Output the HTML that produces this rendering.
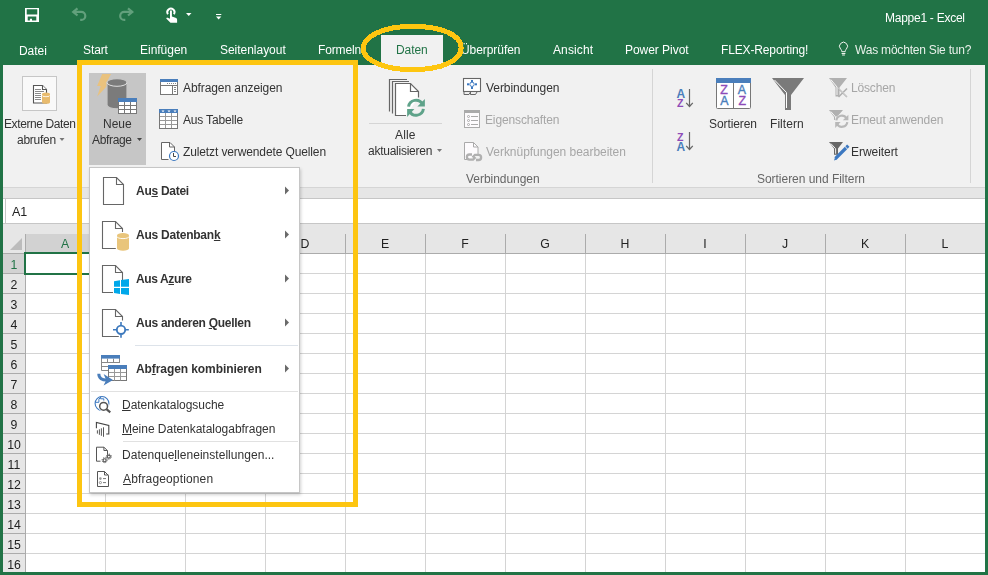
<!DOCTYPE html>
<html><head><meta charset="utf-8">
<style>
*{margin:0;padding:0;box-sizing:border-box}
html,body{width:988px;height:575px;overflow:hidden;background:#217346;font-family:"Liberation Sans",sans-serif;font-size:11.7px;color:#444}
.a{position:absolute}
.t{position:absolute;white-space:nowrap;line-height:1;will-change:transform}
.w{color:#fff}
.u{position:absolute;white-space:nowrap;line-height:20px;font-size:12px;will-change:transform}
svg{position:absolute;overflow:visible}
</style></head><body>
<!-- title bar -->

<!-- tabs -->
<div class="a" style="left:381px;top:35px;width:62px;height:31px;background:#f1f1f1"></div>

<!-- ribbon -->
<div class="a" style="left:3px;top:65px;width:982px;height:123px;background:#f1f1f1;border-bottom:1px solid #d5d5d5"></div>
<div class="a" style="left:3px;top:188px;width:982px;height:10px;background:#e6e6e6"></div>


<!-- ribbon content -->
<div class="a" style="left:22px;top:76px;width:35px;height:35px;border:1px solid #c6c6c6;background:#f9f9f9"></div>
<svg style="left:0;top:0" width="988" height="200">
 <path d="M33.5 85.5h9l4 4v13.5h-13z" fill="#fff" stroke="#555" stroke-width="1.1"/>
 <path d="M42.5 85.5v4h4" fill="#fff" stroke="#555" stroke-width="1.1"/>
 <g stroke="#8a8a8a" stroke-width="1"><path d="M35 89.5h6M35 91.5h9M35 93.5h6M35 95.5h6M35 97.5h6M35 99.5h6"/></g>
 <path d="M42 94.2a4 1.6 0 0 1 8 0v8a4 1.6 0 0 1-8 0z" fill="#e8bb6e"/>
 <path d="M42 95.3a4 1.4 0 0 0 8 0" fill="none" stroke="#fff" stroke-width="0.8"/>
</svg>
<svg style="left:0;top:0" width="100" height="160"><path d="M59.5 138h5l-2.5 3z" fill="#777"/></svg>

<div class="a" style="left:89px;top:73px;width:57px;height:92px;background:#c6c6c6"></div>
<svg style="left:0;top:0" width="200" height="200">
 <path d="M102.2 73.9h8.8l-4.6 9.1h3.4l-12.6 13.5l3.5-10.4h-3.6z" fill="#e9c27e"/>
 <path d="M107 82.5a10 3.8 0 0 1 20 0v22.5a10 3.8 0 0 1-20 0z" fill="#7b7b7b" stroke="#c6c6c6" stroke-width="1.2"/>
 <path d="M107 82.5a10 3.8 0 0 0 20 0" fill="none" stroke="#e0e0e0" stroke-width="1"/>
 <rect x="118" y="98" width="19" height="16" fill="#777"/>
 <rect x="118" y="98" width="19" height="4" fill="#4a7ebb"/>
 <g fill="#fff">
  <rect x="119" y="102" width="5" height="3"/><rect x="125" y="102" width="5" height="3"/><rect x="131" y="102" width="5" height="3"/>
  <rect x="119" y="106" width="5" height="3"/><rect x="125" y="106" width="5" height="3"/><rect x="131" y="106" width="5" height="3"/>
  <rect x="119" y="110" width="5" height="3"/><rect x="125" y="110" width="5" height="3"/><rect x="131" y="110" width="5" height="3"/>
 </g>
 <!-- abfragen anzeigen -->
 <rect x="160.5" y="79.5" width="17" height="15" fill="#fff" stroke="#777"/>
 <rect x="160" y="79" width="18" height="3" fill="#4a7ebb"/>
 <path d="M161 85.5h16M172.5 86v8" stroke="#777" fill="none"/>
 <g fill="#888"><rect x="167" y="83" width="1" height="1"/><rect x="169" y="83" width="1" height="1"/><rect x="171" y="83" width="1" height="1"/><rect x="173" y="83" width="1" height="1"/><rect x="175" y="83" width="1" height="1"/>
 <rect x="174" y="87" width="2" height="1"/><rect x="174" y="89" width="2" height="1"/><rect x="174" y="91" width="2" height="1"/></g>
 <!-- aus tabelle -->
 <rect x="159.5" y="109.5" width="18" height="19" fill="#fff" stroke="#777"/>
 <rect x="159" y="109" width="19" height="4" fill="#4a7ebb"/>
 <path d="M165.5 113v15M171.5 113v15M160 116.5h17M160 120.5h17M160 124.5h17" stroke="#999" fill="none"/>
 <path d="M161.5 110.5h3l-1.5 1.8zM167.5 110.5h3l-1.5 1.8zM173.5 110.5h3l-1.5 1.8z" fill="#fff"/>
 <!-- zuletzt -->
 <path d="M161.5 142.5h8.5l4.5 4.5v12.5h-13z" fill="#fff"/>
 <path d="M174.5 151.5v-4.5l-4.5-4.5h-8.5v17h7" fill="none" stroke="#666"/>
 <path d="M169.5 142.5v4.5h5" fill="none" stroke="#666"/>
 <circle cx="174" cy="156" r="4.5" fill="#fff" stroke="#3c78c0" stroke-width="1.2"/>
 <path d="M173.5 153v3.5h2.5" fill="none" stroke="#444" stroke-width="1"/>
</svg>
<svg style="left:0;top:0" width="200" height="200"><path d="M137 138h5l-2.5 3z" fill="#444"/></svg>

<!-- Verbindungen group -->
<svg style="left:0;top:0" width="988" height="200">
 <path d="M389.5 111.5v-32h17.5" fill="none" stroke="#666" stroke-width="1.2"/>
 <path d="M392.5 113.5v-32h16.5" fill="none" stroke="#666" stroke-width="1.2"/>
 <path d="M406 115.5h-10.5v-32h15l8 8v6" fill="#fff" stroke="#666" stroke-width="1.2"/>
 <path d="M410.5 83.5v8h8" fill="none" stroke="#666" stroke-width="1.2"/>
 <path d="M408.6 106.6A7.4 7.4 0 0 1 422.4 104.05" fill="none" stroke="#5fa38a" stroke-width="3"/>
 <path d="M424.9 99.1V106.6H417.4z" fill="#5fa38a"/>
 <path d="M423.4 108.9A7.4 7.4 0 0 1 409.6 111.45" fill="none" stroke="#5fa38a" stroke-width="3"/>
 <path d="M407.1 108.9V116.9L414.4 108.9z" fill="#5fa38a"/>
 <path d="M369 123.5h73" stroke="#d5d5d5"/>
 <!-- verbindungen icon -->
 <rect x="463.5" y="78.5" width="17" height="13" fill="#fff" stroke="#666" stroke-width="1.1"/>
 <path d="M464 92v2.5h5l1.5-2.5M470.5 92v2.5h5l1.5-2.5" fill="none" stroke="#666" stroke-width="1"/>
 <circle cx="472" cy="84.3" r="2.2" fill="none" stroke="#3c78c0" stroke-width="1"/>
 <g fill="#3c78c0"><rect x="471" y="80" width="2" height="2"/><rect x="471" y="87" width="2" height="2"/><rect x="467" y="83.3" width="2" height="2"/><rect x="475" y="83.3" width="2" height="2"/></g>
 <!-- eigenschaften -->
 <rect x="464.5" y="110.5" width="15" height="17" fill="#fdfbfd" stroke="#aaa"/>
 <rect x="464" y="110" width="16" height="3" fill="#aaa"/>
 <g fill="none" stroke="#aaa"><circle cx="468.5" cy="116.5" r="1"/><circle cx="468.5" cy="120.5" r="1"/><circle cx="468.5" cy="124.5" r="1"/><path d="M471 116.5h7M471 120.5h7M471 124.5h7"/></g>
 <!-- verknuepfungen -->
 <path d="M468 159.5h-3.5v-17h9l4.5 4.5v7" fill="#fdfbfd" stroke="#aaa"/>
 <path d="M473.5 142.5v4.5h4.5" fill="none" stroke="#aaa"/>
 <g fill="none" stroke="#b0b0b0" stroke-width="2.3"><path d="M472 154.5h-2.5a2.6 2.6 0 0 0 0 5.2h3.5l2.5-2.6"/><path d="M476 160h2.5a2.6 2.6 0 0 0 0-5.2h-3.5l-2.5 2.6"/></g>
 <path d="M652.5 69v114" stroke="#d5d5d5"/>
 <path d="M970.5 69v114" stroke="#d5d5d5"/>
</svg>
<svg style="left:0;top:0" width="988" height="200"><path d="M437 149h5l-2.5 3z" fill="#777"/></svg>

<!-- Sort & filter -->
<svg style="left:0;top:0" width="988" height="200">
 <text x="676.5" y="98" font-family="Liberation Sans" font-weight="bold" font-size="12" fill="#4a7ebb">A</text>
 <text x="677" y="107" font-family="Liberation Sans" font-weight="bold" font-size="10.6" fill="#8e4cb8">Z</text>
 <path d="M689.5 89v17.5M686.2 102.8l3.3 3.7l3.3-3.7" fill="none" stroke="#666" stroke-width="1.2"/>
 <text x="677" y="140.5" font-family="Liberation Sans" font-weight="bold" font-size="10.6" fill="#8e4cb8">Z</text>
 <text x="676.5" y="150.5" font-family="Liberation Sans" font-weight="bold" font-size="12" fill="#4a7ebb">A</text>
 <path d="M689.5 132v17.5M686.2 145.8l3.3 3.7l3.3-3.7" fill="none" stroke="#666" stroke-width="1.2"/>
 <!-- sortieren -->
 <rect x="716.5" y="78.5" width="34" height="30" rx="1" fill="#fff" stroke="#777"/>
 <rect x="716" y="78" width="35" height="5" fill="#4a7ebb"/>
 <path d="M733.5 83v25" stroke="#777"/>
 <text x="720.3" y="93.6" font-family="Liberation Sans" font-size="12.4" fill="#8e4cb8" stroke="#8e4cb8" stroke-width="0.35">Z</text>
 <text x="720.3" y="104.8" font-family="Liberation Sans" font-size="12.4" fill="#4a7ebb" stroke="#4a7ebb" stroke-width="0.35">A</text>
 <text x="737.8" y="93.6" font-family="Liberation Sans" font-size="12.4" fill="#4a7ebb" stroke="#4a7ebb" stroke-width="0.35">A</text>
 <text x="738.5" y="104.8" font-family="Liberation Sans" font-size="12.4" fill="#8e4cb8" stroke="#8e4cb8" stroke-width="0.35">Z</text>
 <!-- filter -->
 <path d="M772 78h32l-13 17v15h-6v-15z" fill="#7a7a7a"/>
 <path d="M774.5 80l12 12.5v15.5" fill="none" stroke="#fff" stroke-width="1"/>
 <!-- loeschen -->
 <path d="M829 78h18l-7.5 9.5v9h-4v-9z" fill="#b0b0b0"/>
 <path d="M830.8 79.5l6.2 7.5v8" fill="none" stroke="#fff" stroke-width="0.9"/>
 <path d="M838.5 88.5l8.5 8.5M847 88.5l-8.5 8.5" stroke="#b0b0b0" stroke-width="1.6"/>
 <path d="M838.3 87.8l8.9 9" stroke="#f1f1f1" stroke-width="0.6"/>
 <!-- erneut -->
 <path d="M829 110h14l-6 7v3h-3v-3z" fill="#b0b0b0"/>
 <path d="M830.8 111.5l4.8 5.5v3" fill="none" stroke="#fff" stroke-width="0.9"/>
 <g transform="translate(841.8 121.2) scale(0.74) translate(-416 -107.75)">
 <circle cx="416" cy="107.75" r="9.5" fill="#f1f1f1"/>
 <path d="M408.6 106.6A7.4 7.4 0 0 1 422.4 104.05" fill="none" stroke="#b8b8b8" stroke-width="3"/>
 <path d="M424.9 99.1V106.6H417.4z" fill="#b8b8b8"/>
 <path d="M423.4 108.9A7.4 7.4 0 0 1 409.6 111.45" fill="none" stroke="#b8b8b8" stroke-width="3"/>
 <path d="M407.1 108.9V116.9L414.4 108.9z" fill="#b8b8b8"/>
 </g>
 <!-- erweitert -->
 <path d="M829 142h14l-5 6.5v6.2h-4v-6.2z" fill="#666"/>
 <path d="M830.8 143.5l4.8 5.2v5" fill="none" stroke="#fff" stroke-width="0.9"/>
 <path d="M835.5 158.5l10.5-10.5" stroke="#3c78c0" stroke-width="3.2"/>
 <path d="M846.5 147.5l1.8-1.8" stroke="#3c78c0" stroke-width="3.2"/>
 <path d="M834 160.5l1-3l2 2z" fill="#3c78c0"/>
</svg>

<!-- formula bar -->
<div class="a" style="left:3px;top:198px;width:982px;height:26px;background:#fff;border-top:1px solid #c6c6c6;border-bottom:1px solid #c6c6c6"></div>
<div class="a" style="left:3px;top:253px;width:982px;height:322px;background:#fff"></div>

<!-- grid -->
<svg class="a" style="left:0;top:0" width="988" height="575" shape-rendering="crispEdges">
<rect x="3" y="224" width="982" height="29" fill="#e6e6e6"/>
<rect x="26" y="234" width="79" height="19" fill="#d2d2d2"/>
<rect x="3" y="253" width="22" height="319" fill="#e6e6e6"/>
<rect x="3" y="254" width="22" height="19" fill="#d2d2d2"/>
<line x1="25.5" y1="254" x2="25.5" y2="572" stroke="#d4d4d4"/>
<line x1="25.5" y1="234" x2="25.5" y2="253" stroke="#ababab"/>
<line x1="105.5" y1="254" x2="105.5" y2="572" stroke="#d4d4d4"/>
<line x1="105.5" y1="234" x2="105.5" y2="253" stroke="#ababab"/>
<line x1="185.5" y1="254" x2="185.5" y2="572" stroke="#d4d4d4"/>
<line x1="185.5" y1="234" x2="185.5" y2="253" stroke="#ababab"/>
<line x1="265.5" y1="254" x2="265.5" y2="572" stroke="#d4d4d4"/>
<line x1="265.5" y1="234" x2="265.5" y2="253" stroke="#ababab"/>
<line x1="345.5" y1="254" x2="345.5" y2="572" stroke="#d4d4d4"/>
<line x1="345.5" y1="234" x2="345.5" y2="253" stroke="#ababab"/>
<line x1="425.5" y1="254" x2="425.5" y2="572" stroke="#d4d4d4"/>
<line x1="425.5" y1="234" x2="425.5" y2="253" stroke="#ababab"/>
<line x1="505.5" y1="254" x2="505.5" y2="572" stroke="#d4d4d4"/>
<line x1="505.5" y1="234" x2="505.5" y2="253" stroke="#ababab"/>
<line x1="585.5" y1="254" x2="585.5" y2="572" stroke="#d4d4d4"/>
<line x1="585.5" y1="234" x2="585.5" y2="253" stroke="#ababab"/>
<line x1="665.5" y1="254" x2="665.5" y2="572" stroke="#d4d4d4"/>
<line x1="665.5" y1="234" x2="665.5" y2="253" stroke="#ababab"/>
<line x1="745.5" y1="254" x2="745.5" y2="572" stroke="#d4d4d4"/>
<line x1="745.5" y1="234" x2="745.5" y2="253" stroke="#ababab"/>
<line x1="825.5" y1="254" x2="825.5" y2="572" stroke="#d4d4d4"/>
<line x1="825.5" y1="234" x2="825.5" y2="253" stroke="#ababab"/>
<line x1="905.5" y1="254" x2="905.5" y2="572" stroke="#d4d4d4"/>
<line x1="905.5" y1="234" x2="905.5" y2="253" stroke="#ababab"/>
<line x1="26" y1="273.5" x2="985" y2="273.5" stroke="#d4d4d4"/>
<line x1="3" y1="273.5" x2="25" y2="273.5" stroke="#ababab"/>
<line x1="26" y1="293.5" x2="985" y2="293.5" stroke="#d4d4d4"/>
<line x1="3" y1="293.5" x2="25" y2="293.5" stroke="#ababab"/>
<line x1="26" y1="313.5" x2="985" y2="313.5" stroke="#d4d4d4"/>
<line x1="3" y1="313.5" x2="25" y2="313.5" stroke="#ababab"/>
<line x1="26" y1="333.5" x2="985" y2="333.5" stroke="#d4d4d4"/>
<line x1="3" y1="333.5" x2="25" y2="333.5" stroke="#ababab"/>
<line x1="26" y1="353.5" x2="985" y2="353.5" stroke="#d4d4d4"/>
<line x1="3" y1="353.5" x2="25" y2="353.5" stroke="#ababab"/>
<line x1="26" y1="373.5" x2="985" y2="373.5" stroke="#d4d4d4"/>
<line x1="3" y1="373.5" x2="25" y2="373.5" stroke="#ababab"/>
<line x1="26" y1="393.5" x2="985" y2="393.5" stroke="#d4d4d4"/>
<line x1="3" y1="393.5" x2="25" y2="393.5" stroke="#ababab"/>
<line x1="26" y1="413.5" x2="985" y2="413.5" stroke="#d4d4d4"/>
<line x1="3" y1="413.5" x2="25" y2="413.5" stroke="#ababab"/>
<line x1="26" y1="433.5" x2="985" y2="433.5" stroke="#d4d4d4"/>
<line x1="3" y1="433.5" x2="25" y2="433.5" stroke="#ababab"/>
<line x1="26" y1="453.5" x2="985" y2="453.5" stroke="#d4d4d4"/>
<line x1="3" y1="453.5" x2="25" y2="453.5" stroke="#ababab"/>
<line x1="26" y1="473.5" x2="985" y2="473.5" stroke="#d4d4d4"/>
<line x1="3" y1="473.5" x2="25" y2="473.5" stroke="#ababab"/>
<line x1="26" y1="493.5" x2="985" y2="493.5" stroke="#d4d4d4"/>
<line x1="3" y1="493.5" x2="25" y2="493.5" stroke="#ababab"/>
<line x1="26" y1="513.5" x2="985" y2="513.5" stroke="#d4d4d4"/>
<line x1="3" y1="513.5" x2="25" y2="513.5" stroke="#ababab"/>
<line x1="26" y1="533.5" x2="985" y2="533.5" stroke="#d4d4d4"/>
<line x1="3" y1="533.5" x2="25" y2="533.5" stroke="#ababab"/>
<line x1="26" y1="553.5" x2="985" y2="553.5" stroke="#d4d4d4"/>
<line x1="3" y1="553.5" x2="25" y2="553.5" stroke="#ababab"/>
<line x1="3" y1="253.5" x2="985" y2="253.5" stroke="#ababab"/>
<line x1="25.5" y1="253" x2="25.5" y2="572" stroke="#ababab"/>
<polygon points="22,238 22,250 10,250" fill="#bcbcbc" shape-rendering="auto"/>
</svg>
<div class="t" style="left:35px;width:60px;text-align:center;top:238px;font-size:12.3px;color:#217346">A</div>
<div class="t" style="left:115px;width:60px;text-align:center;top:238px;font-size:12.3px;color:#222">B</div>
<div class="t" style="left:195px;width:60px;text-align:center;top:238px;font-size:12.3px;color:#222">C</div>
<div class="t" style="left:275px;width:60px;text-align:center;top:238px;font-size:12.3px;color:#222">D</div>
<div class="t" style="left:355px;width:60px;text-align:center;top:238px;font-size:12.3px;color:#222">E</div>
<div class="t" style="left:435px;width:60px;text-align:center;top:238px;font-size:12.3px;color:#222">F</div>
<div class="t" style="left:515px;width:60px;text-align:center;top:238px;font-size:12.3px;color:#222">G</div>
<div class="t" style="left:595px;width:60px;text-align:center;top:238px;font-size:12.3px;color:#222">H</div>
<div class="t" style="left:675px;width:60px;text-align:center;top:238px;font-size:12.3px;color:#222">I</div>
<div class="t" style="left:755px;width:60px;text-align:center;top:238px;font-size:12.3px;color:#222">J</div>
<div class="t" style="left:835px;width:60px;text-align:center;top:238px;font-size:12.3px;color:#222">K</div>
<div class="t" style="left:915px;width:60px;text-align:center;top:238px;font-size:12.3px;color:#222">L</div>
<div class="t" style="left:3px;width:22px;text-align:center;top:259px;font-size:12.3px;color:#217346">1</div>
<div class="t" style="left:3px;width:22px;text-align:center;top:279px;font-size:12.3px;color:#222">2</div>
<div class="t" style="left:3px;width:22px;text-align:center;top:299px;font-size:12.3px;color:#222">3</div>
<div class="t" style="left:3px;width:22px;text-align:center;top:319px;font-size:12.3px;color:#222">4</div>
<div class="t" style="left:3px;width:22px;text-align:center;top:339px;font-size:12.3px;color:#222">5</div>
<div class="t" style="left:3px;width:22px;text-align:center;top:359px;font-size:12.3px;color:#222">6</div>
<div class="t" style="left:3px;width:22px;text-align:center;top:379px;font-size:12.3px;color:#222">7</div>
<div class="t" style="left:3px;width:22px;text-align:center;top:399px;font-size:12.3px;color:#222">8</div>
<div class="t" style="left:3px;width:22px;text-align:center;top:419px;font-size:12.3px;color:#222">9</div>
<div class="t" style="left:3px;width:22px;text-align:center;top:439px;font-size:12.3px;color:#222">10</div>
<div class="t" style="left:3px;width:22px;text-align:center;top:459px;font-size:12.3px;color:#222">11</div>
<div class="t" style="left:3px;width:22px;text-align:center;top:479px;font-size:12.3px;color:#222">12</div>
<div class="t" style="left:3px;width:22px;text-align:center;top:499px;font-size:12.3px;color:#222">13</div>
<div class="t" style="left:3px;width:22px;text-align:center;top:519px;font-size:12.3px;color:#222">14</div>
<div class="t" style="left:3px;width:22px;text-align:center;top:539px;font-size:12.3px;color:#222">15</div>
<div class="t" style="left:3px;width:22px;text-align:center;top:559px;font-size:12.3px;color:#222">16</div>
<div class="a" style="left:24px;top:252px;width:83px;height:23px;border:2px solid #217346"></div>

<!-- name box -->
<div class="a" style="left:5px;top:198px;width:120px;height:26px;background:#fff;border:1px solid #c6c6c6"></div>
<div class="a" style="left:0;top:572px;width:988px;height:3px;background:#217346"></div>

<!-- dropdown menu -->
<div class="a" style="left:89px;top:167px;width:211px;height:326px;background:#fff;border:1px solid #c6c6c6;box-shadow:1px 2px 3px rgba(0,0,0,0.18)"></div>
<svg style="left:0;top:0" width="988" height="575">
 <!-- aus datei -->
 <path d="M103.5 177.5h13l7 7v20h-20z" fill="#fff" stroke="#666" stroke-width="1.1"/>
 <path d="M116.5 177.5v7h7" fill="none" stroke="#666" stroke-width="1.1"/>
 <!-- aus datenbank -->
 <path d="M115.8 248.5h-13.3v-27h13l7 7v3.5" fill="#fff" stroke="#666" stroke-width="1.1"/>
 <path d="M115.5 221.5v7h7" fill="none" stroke="#666" stroke-width="1.1"/>
 <path d="M117 235.2a6 2.2 0 0 1 12 0v13.3a6 2.2 0 0 1 -12 0z" fill="#e9c57b"/>
 <path d="M117 236.6a6 2 0 0 0 12 0" fill="none" stroke="#fff" stroke-width="0.9"/>
 <!-- aus azure -->
 <path d="M113 292.5h-10.5v-27h13l7 7v7.5" fill="#fff" stroke="#666" stroke-width="1.1"/>
 <path d="M115.5 265.5v7h7" fill="none" stroke="#666" stroke-width="1.1"/>
 <path d="M114 281.2l6 -0.9v6.5h-6zM121 280.1l8 -1.2v7.9h-8zM114 287.9h6v6.1l-6 -0.9zM121 287.9h8v7.1l-8 -1z" fill="#00a8ea"/>
 <!-- aus anderen quellen -->
 <path d="M118.8 336.5h-16.3v-27h13l7 7v4" fill="#fff" stroke="#666" stroke-width="1.1"/>
 <path d="M115.5 309.5v7h7" fill="none" stroke="#666" stroke-width="1.1"/>
 <circle cx="121" cy="329.8" r="4.2" fill="#fff" stroke="#3d79bd" stroke-width="1.9"/>
 <path d="M121 322v3M121 334.6v3.1M113 329.8h3.1M125.8 329.8h3" stroke="#3d79bd" stroke-width="1.6"/>
 <!-- kombinieren -->
 <path d="M101.5 355.5v15h6.5M101.5 366.5h6.5M101.5 362.5h18M107.5 358.6v4M113.5 358.6v4M119.5 355v8" fill="none" stroke="#888"/>
 <rect x="101" y="355" width="19" height="3.6" fill="#4a7ebb"/>
 <rect x="108.5" y="365.5" width="18" height="15" fill="#fff" stroke="#777"/>
 <rect x="108" y="365" width="19" height="4" fill="#4a7ebb"/>
 <path d="M114.5 369v11.5M120.5 369v11.5M109 372.5h17M109 376.5h17" stroke="#999"/>
 <path d="M98.8 373.8c0 4.5 3.5 6.4 8.2 6.2" fill="none" stroke="#4a7ebb" stroke-width="3"/>
 <path d="M103.6 374l9.4 6l-9.4 5.5l2.6-5.5z" fill="#4a7ebb"/>
 <!-- separators -->
 <path d="M135 345.5h163" stroke="#dde3ea"/>
 <path d="M91 391.5h207" stroke="#e1e1e1"/>
 <path d="M123 441.5h175" stroke="#e1e1e1"/>
 <!-- arrows -->
 <path d="M285 186.5l4 4l-4 4z" fill="#6a6a6a"/>
 <path d="M285 230.5l4 4l-4 4z" fill="#6a6a6a"/>
 <path d="M285 274.5l4 4l-4 4z" fill="#6a6a6a"/>
 <path d="M285 318.5l4 4l-4 4z" fill="#6a6a6a"/>
 <path d="M285 364.5l4 4l-4 4z" fill="#6a6a6a"/>
 <!-- datenkatalogsuche -->
 <circle cx="102" cy="403.4" r="6.9" fill="none" stroke="#3c78c0" stroke-width="1.1"/>
 <path d="M95.3 402.3h3.6v-3.2l1.6-1.6M100.6 396.6v2.2h3.2v1.8" fill="none" stroke="#3c78c0" stroke-width="1"/>
 <circle cx="103.6" cy="406.3" r="4.4" fill="#fff" stroke="#fff" stroke-width="2"/>
 <circle cx="103.6" cy="406.3" r="3.9" fill="#fff" stroke="#555" stroke-width="1.5"/>
 <path d="M106.4 409.1l3.9 3.3" stroke="#555" stroke-width="2.1"/>
 <!-- meine datenkatalog -->
 <path d="M96.4 428.3v-5.8l12.4 3v8.5h-2.6" fill="none" stroke="#444" stroke-width="1.1"/>
 <path d="M97.4 430.3v3.3M99.4 429.3v5.5M101.4 428.3v7.5M103.5 427.3v9.5" stroke="#444" stroke-width="0.9"/>
 <!-- datenquellen -->
 <path d="M100.5 461.2h-4v-14h7.5l3.5 3.5v4" fill="#fff" stroke="#555" stroke-width="1"/>
 <path d="M103.9 447.2v3.3h3.4" fill="none" stroke="#555" stroke-width="1"/>
 <circle cx="108.8" cy="456.6" r="1.5" fill="#fff" stroke="#555" stroke-width="1.1"/>
 <circle cx="108.8" cy="456.6" r="2.5" fill="none" stroke="#555" stroke-width="1" stroke-dasharray="1.1 0.85"/>
 <circle cx="104.6" cy="460.2" r="1.5" fill="#fff" stroke="#555" stroke-width="1.1"/>
 <circle cx="104.6" cy="460.2" r="2.5" fill="none" stroke="#555" stroke-width="1" stroke-dasharray="1.1 0.85"/>
 <!-- abfrageoptionen -->
 <path d="M97.5 471.5h7l4 4v11h-11z" fill="#fff" stroke="#555" stroke-width="1"/>
 <path d="M104.5 471.5v3.5h4" fill="none" stroke="#555" stroke-width="1"/>
 <circle cx="100.4" cy="478.6" r="1.3" fill="#999"/>
 <circle cx="100.4" cy="482.6" r="1.1" fill="none" stroke="#888" stroke-width="0.9"/>
 <path d="M103 478.6h3M103 482.6h3" stroke="#777"/>
</svg>

<!-- texts -->
<div class="u" style="left:884.8px;top:8px;color:#fff;letter-spacing:-0.262px">Mappe1 - Excel</div>
<div class="u" style="left:18.6px;top:41px;color:#fff;letter-spacing:-0.05px">Datei</div>
<div class="u" style="left:83.3px;top:40px;color:#fff;letter-spacing:-0.1px">Start</div>
<div class="u" style="left:140.3px;top:40px;color:#fff;letter-spacing:-0.014px">Einfügen</div>
<div class="u" style="left:219.8px;top:40px;color:#fff;letter-spacing:-0.027px">Seitenlayout</div>
<div class="u" style="left:318.0px;top:40px;color:#fff;letter-spacing:-0.15px">Formeln</div>
<div class="u" style="left:395.8px;top:40px;color:#217346;letter-spacing:-0.075px">Daten</div>
<div class="u" style="left:461.0px;top:40px;color:#fff;letter-spacing:-0.067px">Überprüfen</div>
<div class="u" style="left:553.0px;top:40px;color:#fff;letter-spacing:0.117px">Ansicht</div>
<div class="u" style="left:625.0px;top:40px;color:#fff;letter-spacing:-0.04px">Power Pivot</div>
<div class="u" style="left:721.0px;top:40px;color:#fff;letter-spacing:-0.143px">FLEX-Reporting!</div>
<div class="u" style="left:855.2px;top:40px;color:#e8f0ea;letter-spacing:-0.2px">Was möchten Sie tun?</div>
<div class="u" style="left:3.7px;top:114px;color:#333;letter-spacing:-0.392px">Externe Daten</div>
<div class="u" style="left:16.6px;top:130px;color:#333;letter-spacing:-0.25px">abrufen</div>
<div class="u" style="left:103.0px;top:114px;color:#333">Neue</div>
<div class="u" style="left:92.1px;top:130px;color:#333;letter-spacing:-0.333px">Abfrage</div>
<div class="u" style="left:183.0px;top:78px;color:#333;letter-spacing:-0.081px">Abfragen anzeigen</div>
<div class="u" style="left:183.0px;top:110px;color:#333;letter-spacing:-0.17px">Aus Tabelle</div>
<div class="u" style="left:183.0px;top:142px;color:#333;letter-spacing:-0.12px">Zuletzt verwendete Quellen</div>
<div class="u" style="left:395.1px;top:125px;color:#333;letter-spacing:0.133px">Alle</div>
<div class="u" style="left:368.4px;top:141px;color:#333;letter-spacing:-0.25px">aktualisieren</div>
<div class="u" style="left:486.0px;top:78px;color:#333;letter-spacing:-0.055px">Verbindungen</div>
<div class="u" style="left:485.0px;top:110px;color:#a6a6a6;letter-spacing:-0.133px">Eigenschaften</div>
<div class="u" style="left:486.0px;top:142px;color:#a6a6a6;letter-spacing:-0.039px">Verknüpfungen bearbeiten</div>
<div class="u" style="left:466.1px;top:169px;color:#666;letter-spacing:-0.045px">Verbindungen</div>
<div class="u" style="left:709.2px;top:114px;color:#333;letter-spacing:-0.088px">Sortieren</div>
<div class="u" style="left:770.2px;top:114px;color:#333;letter-spacing:0.05px">Filtern</div>
<div class="u" style="left:757.3px;top:169px;color:#666;letter-spacing:-0.035px">Sortieren und Filtern</div>
<div class="u" style="left:851.4px;top:78px;color:#a6a6a6;letter-spacing:-0.167px">Löschen</div>
<div class="u" style="left:851.4px;top:110px;color:#a6a6a6;letter-spacing:-0.121px">Erneut anwenden</div>
<div class="u" style="left:851.4px;top:142px;color:#333;letter-spacing:-0.05px">Erweitert</div>
<div class="u" style="left:136.2px;top:181px;color:#333;font-weight:bold;letter-spacing:-0.281px">Au<u>s</u> Datei</div>
<div class="u" style="left:136.2px;top:225px;color:#333;font-weight:bold;letter-spacing:-0.233px">Aus Datenban<u>k</u></div>
<div class="u" style="left:136.2px;top:269px;color:#333;font-weight:bold;letter-spacing:-0.375px">Aus A<u>z</u>ure</div>
<div class="u" style="left:136.2px;top:313px;color:#333;font-weight:bold;letter-spacing:-0.278px">Aus anderen <u>Q</u>uellen</div>
<div class="u" style="left:136.2px;top:359px;color:#333;font-weight:bold;letter-spacing:-0.084px">Ab<u>f</u>ragen kombinieren</div>
<div class="u" style="left:121.5px;top:395px;color:#333;letter-spacing:-0.031px"><u>D</u>atenkatalogsuche</div>
<div class="u" style="left:121.5px;top:419px;color:#333;letter-spacing:-0.028px"><u>M</u>eine Datenkatalogabfragen</div>
<div class="u" style="left:121.5px;top:445px;color:#333;letter-spacing:0.037px">Datenque<u>l</u>leneinstellungen...</div>
<div class="u" style="left:122.5px;top:469px;color:#333;letter-spacing:0.143px"><u>A</u>bfrageoptionen</div>
<div class="u" style="left:12.2px;top:202px;color:#222;font-size:12.5px">A1</div>
<!-- yellow highlight -->
<div class="a" style="left:77px;top:60px;width:281px;height:447px;border:5px solid #fdc511"></div>
<svg style="left:0;top:0" width="988" height="100">
 <path d="M412 26.3 C441.46 26.3 461.1 34.88 461.1 47.75 C461.1 60.92 441.46 69.7 412 69.7 C384.67 69.7 363.2 60.37 363.2 48.5 C363.2 36.07 384.67 26.3 412 26.3Z" fill="none" stroke="#fec610" stroke-width="5" shape-rendering="crispEdges"/>
</svg>

<!-- QAT -->
<svg style="left:0;top:0" width="988" height="40">
 <path fill="#fff" fill-rule="evenodd" d="M25 8h14v14h-14z M26.7 9.2h10.6v5.4h-10.6z M27.7 16.6h8.6v4h-4.3v-1.8h-2.1v1.8h-2.2z"/>
 <g fill="none" stroke="#62a07c" stroke-width="2.2"><path d="M77.5 8.3L73.2 11.9L77.5 15.5"/><path d="M73 11.9H81.3A4 4 0 0 1 81.3 19.9H80.2"/></g>
 <g fill="none" stroke="#62a07c" stroke-width="2.2"><path d="M128 8.3L132.3 11.9L128 15.5"/><path d="M132.5 11.9H124.2A4 4 0 0 0 124.2 19.9H125.3"/></g>
 <path d="M167.9 14.2A3.6 3.6 0 1 1 173.9 14.2" fill="none" stroke="#fff" stroke-width="1.9"/>
 <path d="M170 10.6h1.9v6l3.6 1.1c1 0.3 1.6 1 1.6 2v3h-6.6l-4.3-4.3l0.8-0.8l3 1.2z" fill="#fff"/>
 <path d="M186 13h5.5l-2.75 3z" fill="#fff"/>
 <path d="M216 14.5h5.3" stroke="#fff" stroke-width="1"/>
 <path d="M216 16.5h5.3l-2.65 3z" fill="#fff"/>
</svg>
<svg style="left:0;top:0" width="988" height="70">
 <path d="M840.6 49a4 4 0 1 1 5.8 0c-0.9 0.9-1.2 1.8-1.2 2.7h-3.4c0-0.9 -0.3-1.8 -1.2-2.7z" fill="none" stroke="#f0f4ee" stroke-width="1"/>
 <path d="M841.6 53.5h3.8M842.1 55h2.8" stroke="#f0f4ee" stroke-width="1"/>
</svg>

</body></html>
